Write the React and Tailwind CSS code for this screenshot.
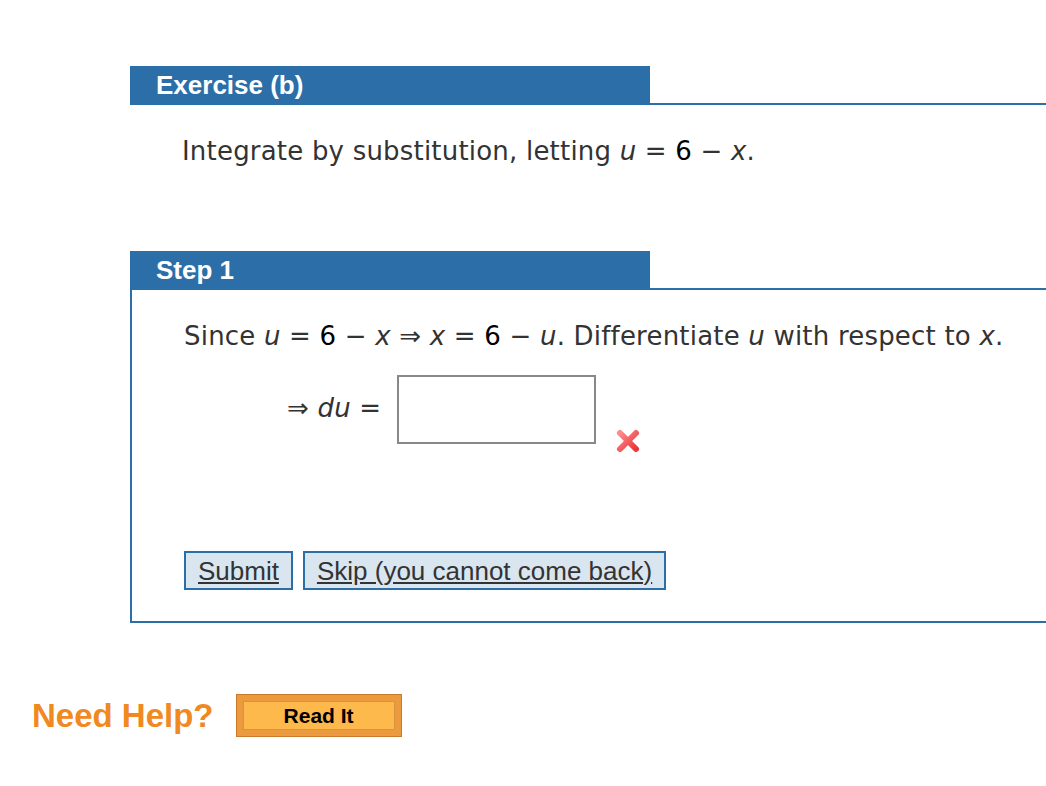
import React from 'react'

const blue = 'bg-[#2c6fa8]'

function SectionHeader({ title }) {
  return (
    <div className="flex items-end">
      <div className={`w-[520px] h-[39px] ${blue} pl-[26px] flex items-center text-white font-bold text-[26px] font-['Liberation_Sans',Arial,sans-serif]`}>
        {title}
      </div>
      <div className="flex-1 border-b-2 border-[#2c6fa8]" />
    </div>
  )
}

function RedX() {
  return (
    <svg width="26" height="26" viewBox="0 0 26 26">
      <defs>
        <linearGradient id="rx" x1="0" y1="0" x2="1" y2="1">
          <stop offset="0" stopColor="#ff8a8a" />
          <stop offset="1" stopColor="#e8363c" />
        </linearGradient>
      </defs>
      <path d="M5 5 L21 21 M21 5 L5 21" stroke="url(#rx)" strokeWidth="6" strokeLinecap="round" />
    </svg>
  )
}

export default function App() {
  const mathFont = "font-['DejaVu_Sans',Verdana,sans-serif] tracking-[0.2px]"
  return (
    <div className="w-[1046px] h-[786px] bg-white overflow-hidden text-[#333]">
      <div className="pt-[66px] pl-[130px]">
        <SectionHeader title="Exercise (b)" />
        <div className={`pl-[52px] pt-[27px] h-[146px] text-[26px] ${mathFont}`}>
          Integrate by substitution, letting <i>u</i> = <span className="text-black">6</span> − <i>x</i>.
        </div>

        <SectionHeader title="Step 1" />
        <div className="border-l-2 border-b-2 border-[#2c6fa8] h-[333px] pl-[52px] pt-[31px]">
          <p className={`text-[26px] leading-[30px] ${mathFont}`}>
            Since <i>u</i> = <span className="text-black">6</span> − <i>x</i> ⇒ <i>x</i> = <span className="text-black">6</span> − <i>u</i>. Differentiate <i>u</i> with respect to <i>x</i>.
          </p>
          <div className="flex items-start h-[78px] mt-[24px] ml-[103px]">
            <span className={`text-[26px] leading-[30px] mt-[18px] ${mathFont}`}>⇒ <i>du</i> =</span>
            <div className="ml-[16px] w-[199px] h-[69px] border-2 border-[#888] bg-white" />
            <div className="ml-[19px] mt-[53px]"><RedX /></div>
          </div>
          <div className="flex gap-[10px] mt-[98px] font-['Liberation_Sans',Arial,sans-serif] text-[26px]">
            <button className="h-[39px] px-[12px] bg-[#d9e5ef] border-2 border-[#2c6fa8] underline text-[#333] leading-none">Submit</button>
            <button className="h-[39px] px-[12px] bg-[#d9e5ef] border-2 border-[#2c6fa8] underline text-[#333] leading-none">Skip (you cannot come back)</button>
          </div>
        </div>
      </div>

      <div className="flex items-center mt-[68px] pl-[32px]">
        <span className="text-[#f0891f] font-bold text-[33px] font-['Liberation_Sans',Arial,sans-serif]">Need Help?</span>
        <div className="ml-[22px] w-[166px] h-[43px] bg-[#ec9a3e] border border-[#c97a2a] p-[6px] flex">
          <div className="flex-1 bg-[#fdb94b] border border-[#d89540] flex items-center justify-center font-bold text-[21px] text-black font-['Liberation_Sans',Arial,sans-serif]">
            Read It
          </div>
        </div>
      </div>
    </div>
  )
}
